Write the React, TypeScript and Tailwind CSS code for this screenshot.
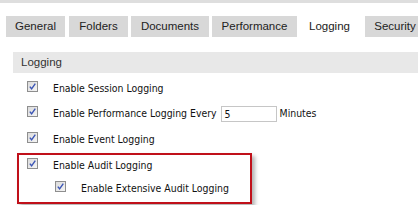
import React from "react"

const tabs = [
  { label: "General", w: "w-[59px]", ml: "ml-0" },
  { label: "Folders", w: "w-[59px]", ml: "ml-[4px]" },
  { label: "Documents", w: "w-[78px]", ml: "ml-[3px]" },
  { label: "Performance", w: "w-[85px]", ml: "ml-[3px]" },
  { label: "Logging", w: "w-[65px]", ml: "ml-0", active: true },
  { label: "Security", w: "w-[60px]", ml: "ml-[3px]" },
]

function Check() {
  return (
    <svg width="11" height="11" viewBox="0 0 11 11" className="shrink-0 mb-[5px]">
      <defs>
        <linearGradient id="cbg" x1="0" y1="0" x2="1" y2="1">
          <stop offset="0" stopColor="#dadada" />
          <stop offset="1" stopColor="#f6f6f6" />
        </linearGradient>
      </defs>
      <rect x="0.5" y="0.5" width="10" height="10" fill="url(#cbg)" stroke="#8e8e8e" />
      <path d="M2.8 5.6 L4.6 7.8 L8.3 2.6" fill="none" stroke="#3b55b5" strokeWidth="1.4" />
    </svg>
  )
}

function Row({ label, h = "h-[25px]", children }: { label: string; h?: string; children?: React.ReactNode }) {
  return (
    <div className={`flex items-center ${h}`}>
      <Check />
      <span className="ml-[15px] whitespace-nowrap">{label}</span>
      {children}
    </div>
  )
}

export default function App() {
  return (
    <div className="w-[418px] h-[205px] overflow-hidden bg-white font-['Liberation_Sans',Arial,sans-serif]">
      <div className="h-[3px] bg-[#dedede]" />
      <div className="flex pl-[6px] pt-[13px]">
        {tabs.map((t) => (
          <div
            key={t.label}
            className={`${t.w} ${t.ml} h-[21px] shrink-0 flex items-center justify-center text-[11.5px] text-[#222] ${
              t.active ? "bg-white" : "bg-[#d8d8d8]"
            }`}
          >
            {t.label}
          </div>
        ))}
      </div>
      <div className="pl-[13px] pt-[15px]">
        <div className="h-[21px] bg-[#e8e8e8] flex items-center pl-[8px] text-[11.5px] text-[#333]">Logging</div>
        <div className="pt-[4px] text-[10.4px] text-[#111] font-['DejaVu_Sans_Condensed','DejaVu_Sans',sans-serif] font-stretch-condensed">
          <div className="pl-[14px]">
            <Row label="Enable Session Logging" h="h-[24px]" />
            <Row label="Enable Performance Logging Every" h="h-[26px]">
              <div className="ml-[4px] w-[56px] h-[16px] border border-[#c6c6c6] flex items-center pl-[3px] leading-none">5</div>
              <span className="ml-[3px]">Minutes</span>
            </Row>
            <Row label="Enable Event Logging" h="h-[26px]" />
          </div>
          <div className="ml-[4px] w-[235px] border-2 border-[#c0101a] shadow-[3px_3px_4px_rgba(0,0,0,0.3)] pl-[8px]">
            <Row label="Enable Audit Logging" h="h-[22px]" />
            <div className="pl-[28px] pb-[2px]">
              <Row label="Enable Extensive Audit Logging" h="h-[23px]" />
            </div>
          </div>
        </div>
      </div>
    </div>
  )
}
